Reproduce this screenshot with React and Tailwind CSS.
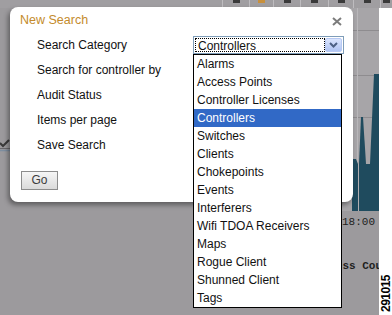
import React from "react";

const categories = [
  "Alarms",
  "Access Points",
  "Controller Licenses",
  "Controllers",
  "Switches",
  "Clients",
  "Chokepoints",
  "Events",
  "Interferers",
  "Wifi TDOA Receivers",
  "Maps",
  "Rogue Client",
  "Shunned Client",
  "Tags",
];

const labels = ["Search Category", "Search for controller by", "Audit Status", "Items per page", "Save Search"];

// header cells at the top of the page behind the dialog
const headerCells = [
  { w: "w-[27px]", mark: "bg-[#3a3a3a]" },
  { w: "w-[24px]", mark: "bg-[#c8903c]" },
  { w: "w-[27px]", mark: "bg-[#3a3a3a]" },
  { w: "w-[28px]", mark: "bg-[#3a3a3a]" },
  { w: "w-[25px]", mark: "bg-[#3a3a3a]" },
  { w: "w-[27px]", mark: "bg-[#3a3a3a]" },
  { w: "w-[12px]", mark: "bg-[#3a3a3a]" },
];

const Chart = () => (
  <svg width="66" height="203" viewBox="313 9 66 203" className="block">
    <rect x="313" y="9" width="66" height="203" fill="#a7a5a8" />
    <line x1="313" y1="31.5" x2="379" y2="31.5" stroke="#8e8c8f" />
    <line x1="313" y1="76.5" x2="379" y2="76.5" stroke="#8e8c8f" />
    <line x1="313" y1="118.5" x2="379" y2="118.5" stroke="#8e8c8f" />
    <line x1="357.5" y1="9" x2="357.5" y2="212" stroke="#b9b7ba" />
    <path d="M374 75 L379 75 L379 212 L352 212 L352 160 L356 160 L358 165 L370 165 Z" fill="#1f4b5e" />
    <path d="M361 118 L363 118 L366 165 L359 165 Z" fill="#1f4b5e" />
    <line x1="358.5" y1="165" x2="358.5" y2="212" stroke="#b0aeb1" />
  </svg>
);

const App = () => {
  return (
    <div className="relative w-[392px] h-[315px] overflow-hidden bg-[#9c9a9d] font-['Liberation_Sans',Arial,sans-serif] flex flex-col">
      {/* background header strip */}
      <div className="h-[8px] flex bg-[#a09ea1]">
        <div className="flex-1" />
        {headerCells.map((c, i) => (
          <div key={i} className={`${c.w} border-l border-[#bebcbf] flex justify-center`}>
            <div className={`h-[3px] w-[7px] ${c.mark}`} />
          </div>
        ))}
      </div>

      {/* background body */}
      <div className="flex-1 flex">
        <div className="flex-1 flex">
          <div className="w-[10px] pt-[131px]">
            <svg width="10" height="14" viewBox="0 0 10 14" className="block">
              <path d="M0 4 L3 7 L9 1" fill="none" stroke="#3a3a3a" strokeWidth="2" />
              <line x1="0" y1="9.5" x2="10" y2="9.5" stroke="#6a686b" />
              <line x1="0" y1="11.5" x2="10" y2="11.5" stroke="#7d8ea0" strokeWidth="1.5" />
            </svg>
          </div>
          <div className="flex-1" />
          <div className="w-[66px] flex flex-col font-['Liberation_Mono',monospace] text-[11px] text-[#1e1e1e] overflow-hidden whitespace-nowrap">
            <Chart />
            <div className="mt-[5px] pl-[29px] leading-[12px]">18:00</div>
            <div className="mt-[32px] pl-[3px] leading-[12px] font-bold">Access Count</div>
          </div>
        </div>
        <div className="w-[13px] bg-white flex flex-col justify-end pb-[3px] items-center">
          <div className="[writing-mode:vertical-rl] rotate-180 text-[12px] font-bold tracking-[-0.5px] leading-[12px] text-black">
            291015
          </div>
        </div>
      </div>

      {/* dialog */}
      <div className="absolute left-[10px] top-[7px] w-[343px] h-[195px] bg-white rounded-[8px] shadow-[-2px_3px_5px_rgba(0,0,0,0.4)] text-[12px] text-[#111]">
        <div className="h-[25px] flex justify-between items-start pl-[10px] pr-[11px]">
          <div className="pt-[6px] leading-[14px] text-[12.5px] text-[#c48b2c]">New Search</div>
          <svg width="10" height="9" viewBox="0 0 10 9" className="mt-[10px]">
            <path d="M1 1 L9 8 M9 1 L1 8" stroke="#7c7c7c" strokeWidth="2" />
          </svg>
        </div>

        <div className="pl-[27px]">
          {labels.map((label, i) => (
            <div key={label} className="h-[25px] flex items-center">
              <div className="w-[156px] leading-[14px]">{label}</div>
              {i === 0 && (
                <div className="relative">
                  <div className="w-[151px] h-[18px] border border-[#7f9db9] bg-white flex p-px">
                    <div className="flex-1 border border-dotted border-black leading-[14px] pl-[2px]">Controllers</div>
                    <div className="w-[17px] rounded-[2px] border border-[#b7c9f3] bg-gradient-to-b from-[#dbe5fd] to-[#b1c5f3] flex items-center justify-center">
                      <svg width="9" height="6" viewBox="0 0 9 6">
                        <path d="M1 1 L4.5 4.5 L8 1" fill="none" stroke="#4d6185" strokeWidth="2" />
                      </svg>
                    </div>
                  </div>
                  {/* open dropdown list */}
                  <div className="absolute left-0 top-[18px] w-[149px] border border-black bg-white z-10">
                    {categories.map((c) => (
                      <div
                        key={c}
                        className={`h-[18px] leading-[18px] pl-[3px] whitespace-nowrap ${
                          c === "Controllers" ? "bg-[#3169c6] text-white" : "text-[#111]"
                        }`}
                      >
                        {c}
                      </div>
                    ))}
                  </div>
                </div>
              )}
            </div>
          ))}
        </div>

        <div className="pl-[11px] mt-[14px]">
          <button className="w-[37px] h-[19px] border border-[#8c8c8c] bg-gradient-to-b from-[#f6f6f6] to-[#dadada] text-[12px] leading-[17px] text-[#3c3c3c]">
            Go
          </button>
        </div>
      </div>
    </div>
  );
};

export default App;
